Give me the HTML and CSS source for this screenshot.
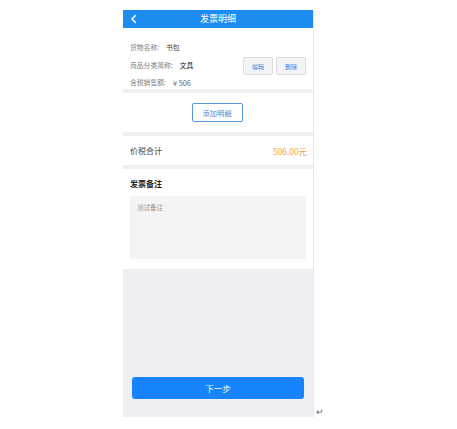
FILE: index.html
```html
<!DOCTYPE html>
<html lang="zh">
<head>
<meta charset="utf-8">
<link rel="stylesheet" href="styles.css">
</head>
<body>
<div class="stage">
  <div class="phone">
    <div class="header">
      <svg class="back" width="8" height="10" viewBox="0 0 8 10"><path d="M5.5 1.5 L2 5 L5.5 8.5" fill="none" stroke="#fff" stroke-width="1.6" stroke-linecap="round" stroke-linejoin="round"/></svg>
      <span class="title">发票明细</span>
    </div>
    <div class="item">
      <div class="rows">
        <div class="row"><span class="lbl">货物名称:</span><span class="val">书包</span></div>
        <div class="row"><span class="lbl">商品分类简称:</span><span class="val dark">文具</span></div>
        <div class="row"><span class="lbl">含税销售额:</span><span class="val num">¥ 506</span></div>
      </div>
      <div class="ops">
        <span class="op">编辑</span>
        <span class="op">删除</span>
      </div>
    </div>
    <div class="add">
      <span class="add-btn">添加明细</span>
    </div>
    <div class="total">
      <span class="total-lbl">价税合计</span>
      <span class="total-val">506.00元</span>
    </div>
    <div class="remark">
      <div class="remark-title">发票备注</div>
      <div class="remark-box">测试备注</div>
    </div>
    <div class="bottom">
      <div class="next">下一步</div>
    </div>
  </div>
  <span class="ret">↵</span>
</div>
</body>
</html>
```
FILE: styles.css
```css
* { box-sizing: border-box; }
html, body { margin: 0; padding: 0; background: #fff; }
body {
  width: 457px;
  height: 429px;
  font-family: "Noto Sans CJK SC", "Noto Sans", sans-serif;
  color: #333;
  overflow: hidden;
}
.stage {
  display: flex;
  align-items: flex-end;
  padding: 10px 0 0 123px;
}
.phone {
  width: 191px;
  height: 407px;
  background: #eff0f4;
  border-right: 1px solid #e8e8e8;
  display: flex;
  flex-direction: column;
}
.header {
  height: 18px;
  background: #1c8cf0;
  display: flex;
  align-items: center;
  justify-content: center;
  position: relative;
}
.back {
  position: absolute;
  left: 7px;
  top: 4px;
}
.title {
  color: #fff;
  font-size: 9px;
  line-height: 18px;
}
.item {
  height: 61px;
  background: #fff;
  display: flex;
  justify-content: space-between;
  padding: 10px 7px 0 7px;
}
.rows { display: flex; flex-direction: column; }
.row {
  font-size: 6.8px;
  line-height: 17.5px;
  height: 17.5px;
  display: flex;
  gap: 7px;
  padding-top: 1px;
}
.lbl { color: #808080; }
.val { color: #444; }
.val.dark { color: #222; }
.val.num { font-size: 7.4px; color: #666; }
.ops {
  display: flex;
  gap: 3px;
  padding-top: 19px;
}
.op {
  width: 30px;
  height: 18px;
  background: #f3f4f6;
  border: 1px solid #dcdcdc;
  border-radius: 2px;
  color: #3a87d8;
  font-size: 6px;
  display: flex;
  align-items: center;
  justify-content: center;
}
.add {
  margin-top: 4px;
  height: 39px;
  background: #fff;
  display: flex;
  align-items: center;
  justify-content: center;
  padding-right: 2px;
}
.add-btn {
  width: 51px;
  height: 19px;
  border: 1px solid #5596de;
  border-radius: 2px;
  color: #4a8ad6;
  font-size: 7.2px;
  display: flex;
  align-items: center;
  justify-content: center;
}
.total {
  margin-top: 4px;
  height: 29px;
  background: #fff;
  display: flex;
  align-items: center;
  justify-content: space-between;
  padding: 0 6px 0 7px;
}
.total-lbl { font-size: 8px; color: #444; }
.total-val { font-size: 8.4px; color: #f2a53a; }
.remark {
  margin-top: 4px;
  height: 100px;
  background: #fff;
  padding: 8px 7px 0 7px;
}
.remark-title {
  font-size: 8px;
  font-weight: bold;
  color: #222;
  line-height: 14px;
  height: 19px;
}
.remark-box {
  width: 176px;
  height: 63px;
  background: #f4f4f5;
  font-size: 6.5px;
  color: #999;
  padding: 6px 7px;
}
.bottom {
  flex: 1;
  display: flex;
  flex-direction: column;
  justify-content: flex-end;
  padding: 0 9px 18px 9px;
}
.next {
  height: 22px;
  background: #1784fc;
  border-radius: 3px;
  color: #fff;
  font-size: 8.5px;
  display: flex;
  align-items: center;
  justify-content: center;
}
.ret {
  font-size: 9px;
  color: #666;
  line-height: 9px;
  margin: 0 0 1px 2px;
}
```
